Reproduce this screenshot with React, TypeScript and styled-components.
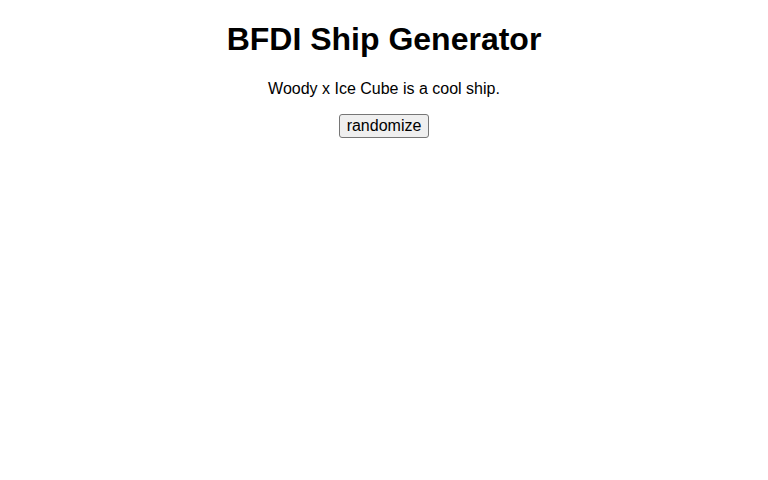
import React, { useState } from "react";
import styled, { createGlobalStyle } from "styled-components";

const GlobalStyle = createGlobalStyle`
  body {
    margin: 0;
    background: #ffffff;
    color: #000000;
    font-family: "Liberation Sans", Arial, sans-serif;
  }
`;

const Page = styled.main`
  text-align: center;
  padding: 0 8px;
`;

const Title = styled.h1`
  font-size: 32px;
  font-weight: bold;
  margin: 21.44px 0;
`;

const Sentence = styled.p`
  font-size: 16px;
  margin: 16px 0;
`;

const RandomizeButton = styled.button`
  font-family: "Liberation Sans", Arial, sans-serif;
  font-size: 16px;
  color: #000000;
  background: #efefef;
  border: 1px solid #767676;
  border-radius: 3px;
  padding: 2px 7px;
  cursor: pointer;

  &:hover {
    background: #e5e5e5;
  }
`;

const characters = [
  "Woody",
  "Ice Cube",
  "Leafy",
  "Firey",
  "Bubble",
  "Pencil",
  "Match",
  "Pen",
  "Eraser",
  "Blocky",
  "Coiny",
  "Needle",
  "Teardrop",
  "Golf Ball",
  "Tennis Ball",
  "Rocky",
  "Snowball",
  "Spongy",
  "Flower",
  "David",
];

const adjectives = ["cool", "cute", "weird", "great", "terrible", "canon"];

const pick = <T,>(list: T[]) => list[Math.floor(Math.random() * list.length)];

export default function App() {
  const [ship, setShip] = useState({ a: "Woody", b: "Ice Cube", adj: "cool" });

  const randomize = () => {
    const a = pick(characters);
    let b = pick(characters);
    while (b === a) b = pick(characters);
    setShip({ a, b, adj: pick(adjectives) });
  };

  return (
    <>
      <GlobalStyle />
      <Page>
        <Title>BFDI Ship Generator</Title>
        <Sentence>
          {ship.a} x {ship.b} is a {ship.adj} ship.
        </Sentence>
        <RandomizeButton onClick={randomize}>randomize</RandomizeButton>
      </Page>
    </>
  );
}
